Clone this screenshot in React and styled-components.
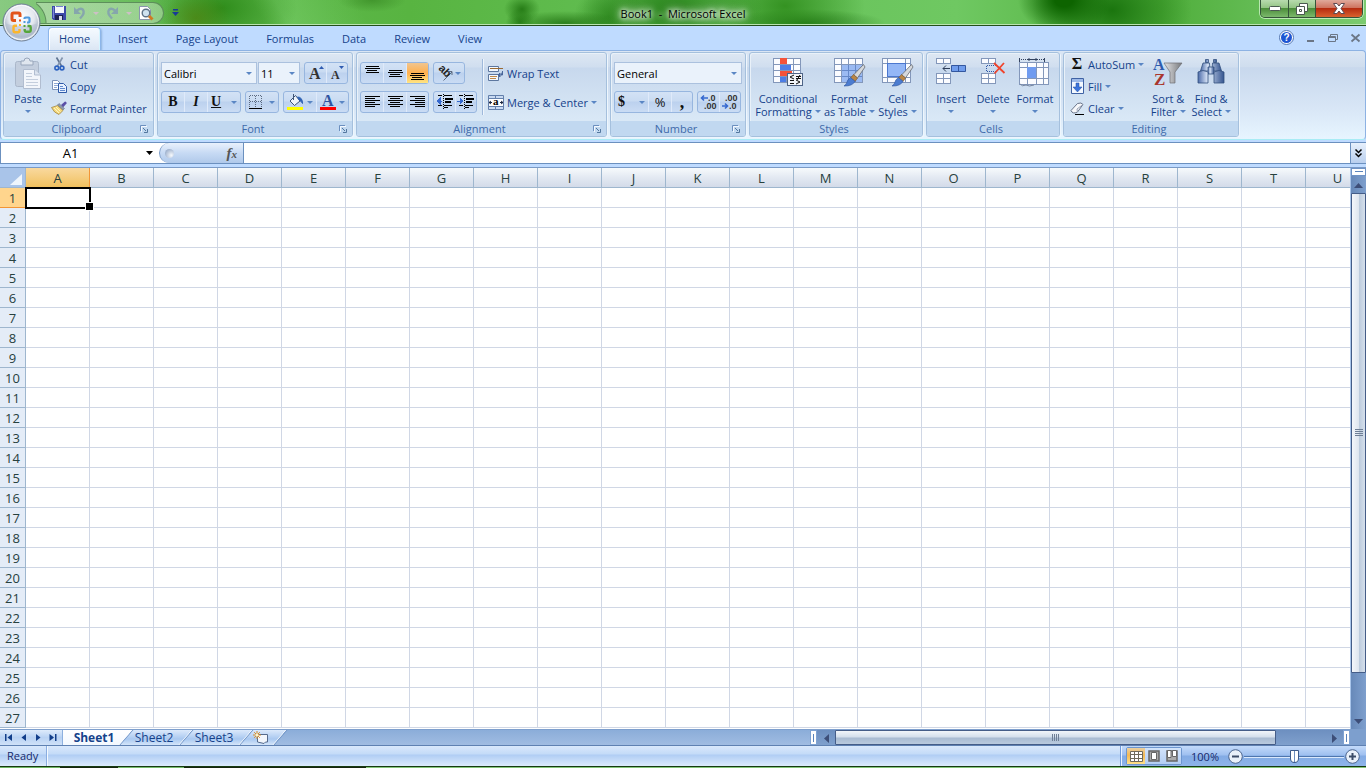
import { useEffect, useState } from "react";
import styled, { createGlobalStyle, css } from "styled-components";

const LETTERS = "ABCDEFGHIJKLMNOPQRSTUVWXYZ".split("");
const TABS = ["Home", "Insert", "Page Layout", "Formulas", "Data", "Review", "View"];

const GlobalStyle = createGlobalStyle`
    * {
        box-sizing: border-box;
    }
    body {
        margin: 0;
        font-family: "Open Sans", "Noto Sans", sans-serif;
        font-size: 11px;
        color: #15428b;
        overflow: hidden;
    }
    button, input, select {
        font: inherit;
        color: inherit;
        margin: 0;
        padding: 0;
        border: 0;
        background: none;
    }
    svg {
        display: block;
        flex: none;
        overflow: visible;
    }
`

const Shell = styled.div`
    height: 100vh;
    display: flex;
    flex-direction: column;
    background: #bfdbff;
`

/* ---------- title bar ---------- */

const TitleBar = styled.header`
    position: relative;
    height: 26px;
    flex: none;
    display: grid;
    grid-template-columns: 1fr auto 1fr;
    border-bottom: 1px solid #22501a;
    box-shadow: inset 0 -1px 0 #b9e3b0;
    background:
        linear-gradient(90deg, rgba(200, 225, 200, 0.35), transparent 13%),
        radial-gradient(ellipse 34px 26px at 196px 18px, rgba(80, 125, 10, 0.6), transparent),
        radial-gradient(ellipse 75px 50px at 222px 8px, rgba(35, 130, 15, 0.8), transparent),
        linear-gradient(60deg, transparent 230px, rgba(125, 210, 110, 0.5) 250px, transparent 320px),
        radial-gradient(ellipse 34px 12px at 372px 0, rgba(50, 130, 30, 0.6), transparent),
        radial-gradient(ellipse 18px 14px at 522px 9px, rgba(25, 110, 10, 0.8), transparent),
        radial-gradient(ellipse 14px 14px at 520px 22px, rgba(25, 110, 10, 0.7), transparent),
        radial-gradient(ellipse 60px 12px at 565px 23px, rgba(25, 105, 10, 0.7), transparent),
        radial-gradient(ellipse 36px 30px at 610px 16px, rgba(30, 120, 15, 0.6), transparent),
        radial-gradient(ellipse 90px 60px at 672px 10px, rgba(25, 115, 12, 0.8), transparent),
        radial-gradient(ellipse 80px 50px at 785px 6px, rgba(35, 130, 15, 0.75), transparent),
        radial-gradient(ellipse 80px 14px at 805px 23px, rgba(20, 100, 10, 0.7), transparent),
        radial-gradient(ellipse 46px 34px at 1064px 0, #0d6400 20%, transparent),
        radial-gradient(ellipse 80px 60px at 1112px 10px, rgba(20, 110, 8, 0.9), transparent),
        linear-gradient(90deg, #66bd5b 0, #58b441 30%, #64c056 50%, #6fc862 70%, #4fae3b 85%, #7bcb70 100%);
`

const QuickAccess = styled.div`
    display: flex;
    align-items: flex-start;
    padding: 2px 0 0 36px;
`

const Pill = styled.div`
    height: 22px;
    padding: 0 9px 0 16px;
    display: flex;
    align-items: center;
    gap: 7px;
    border: 1px solid #5d8f5b;
    border-left: 0;
    border-radius: 0 11px 11px 0;
    background: radial-gradient(circle at -14px 20px, transparent 23px, #5d8f5b 24px, rgba(225, 240, 222, 0.4) 25px);
`

const IconButton = styled.button`
    display: flex;
    align-items: center;
    justify-content: center;
`

const Customize = styled(IconButton)`
    width: 9px;
    height: 22px;
    margin-left: 7px;
`

const Title = styled.h1`
    margin: 0;
    padding-top: 1px;
    font-size: 11px;
    font-weight: 400;
    line-height: 26px;
    color: #000;
    white-space: pre;
    text-shadow: 0 0 4px #fff, 0 0 7px #fff, 0 0 10px #fff, 0 0 14px #e8ffe0;
`

const WindowButtons = styled.div`
    justify-self: end;
    display: flex;
    height: 18px;
    margin-right: 3px;
    border: 1px solid #35543a;
    border-top: 0;
    border-radius: 0 0 5px 5px;
    overflow: hidden;
    box-shadow: 0 0 0 1px rgba(220, 250, 215, 0.7);
`

const WindowButton = styled(IconButton)`
    width: ${(props) => (props.$close ? 47 : 27)}px;
    border-left: ${(props) => (props.$first ? 0 : "1px solid #35543a")};
    background: ${(props) =>
        props.$close
            ? "linear-gradient(#e0a99b, #cf7460 45%, #b62c10 50%, #d9622e)"
            : "linear-gradient(#b8dbae, #93c484 45%, #4c8e3b 50%, #7cb96c)"};
`

const Orb = styled.button`
    position: absolute;
    left: 2px;
    top: 3px;
    z-index: 2;
`

/* ---------- ribbon tabs ---------- */

const TabBar = styled.nav`
    height: 24px;
    flex: none;
    padding: 1px 6px 0 48px;
    display: flex;
    justify-content: space-between;
    background: #bfdbff;
`

const TabList = styled.div`
    display: flex;
    gap: 6px;
`

const Tab = styled.button`
    padding: 0 10px 2px;
    border: 1px solid transparent;
    border-bottom: 0;
    border-radius: 4px 4px 0 0;
    ${(props) =>
        props.$active &&
        css`
            border-color: #8db6ea;
            background: linear-gradient(#f5faff, #e6eff9 60%, #dbe6f4);
            box-shadow: inset 1px 1px 0 #fff, inset -1px 0 0 #d5f4ff, 1px 1px 2px #8fb2de;
        `}
`

const DocButtons = styled.div`
    display: flex;
    align-items: center;
    gap: 13px;
    padding-bottom: 2px;
`

/* ---------- ribbon ---------- */

const Ribbon = styled.div`
    height: 90px;
    flex: none;
    display: flex;
    gap: 3px;
    padding: 1px 2px 2px;
    border: 1px solid #8db2e3;
    border-bottom-color: #a8ecf5;
    border-radius: 4px;
    background: linear-gradient(#dbe6f4, #cfddee 18%, #c8d8ed 19%, #d8e6f6 65%, #e7f5ff);
`

const Group = styled.section`
    width: ${(props) => props.$width}px;
    flex: none;
    display: flex;
    flex-direction: column;
    border: 1px solid #a5c0dd;
    border-radius: 3px;
    background: linear-gradient(#dde7f3, #d0deef 17%, #c7d8ed 18%, #d9e8f6 80%);
    box-shadow: 1px 1px 0 #eef6fd, inset 1px 1px 0 #e9f1f9;
    overflow: hidden;
`

const GroupBody = styled.div`
    flex: 1;
    display: flex;
    padding: 0 3px;
`

const GroupName = styled.div`
    height: 15px;
    display: grid;
    grid-template-columns: 14px 1fr 18px;
    align-items: center;
    text-align: center;
    line-height: 15px;
    color: #3e6aaa;
    background: #c1d8f0;
`

const Stack = styled.div`
    display: flex;
    flex-direction: column;
`

const SmallButton = styled.button`
    height: 22px;
    padding: 0 2px;
    display: flex;
    align-items: center;
    gap: 3px;
    white-space: nowrap;
`

const IconSlot = styled.span`
    width: 16px;
    display: flex;
    justify-content: center;
    color: #111;
`

const BigButton = styled.button`
    width: ${(props) => props.$width || 42}px;
    flex: none;
    display: flex;
    flex-direction: column;
    align-items: center;
    padding-top: 5px;
    line-height: 13px;
    white-space: nowrap;
`

const BigIcon = styled.span`
    height: 34px;
    display: flex;
    align-items: flex-start;
`

const WithArrow = styled.span`
    height: 13px;
    display: flex;
    align-items: center;
    gap: 3px;
`

const Controls = styled.div`
    display: flex;
    flex-direction: column;
    gap: 7px;
    padding-top: 9px;
`

const Line = styled.div`
    display: flex;
    gap: ${(props) => props.$gap || 4}px;
`

const Combo = styled.label`
    width: ${(props) => props.$width}px;
    height: 22px;
    display: grid;
    align-items: center;
    border: 1px solid #abc1de;
    background: #eaf2fb;
    color: #000;

    select {
        grid-area: 1 / 1;
        width: 100%;
        padding-left: 2px;
        appearance: none;
    }
    svg {
        grid-area: 1 / 1;
        justify-self: end;
        margin-right: 4px;
        pointer-events: none;
    }
`

const ButtonSet = styled.div`
    height: 22px;
    display: flex;
    border: 1px solid #97b6df;
    border-radius: 3px;
    background: linear-gradient(#d3e2f5, #c9dbf2 45%, #bcd1ee 50%, #cadcf4);
`

const SetButton = styled.button`
    width: ${(props) => props.$width || 21}px;
    display: flex;
    align-items: center;
    justify-content: ${(props) => (props.$split ? "space-between" : "center")};
    padding: 0 ${(props) => (props.$split ? 3 : 0)}px;
    color: #111;

    & + & {
        border-left: 1px solid #dfeafa;
    }
    ${(props) =>
        props.$on &&
        css`
            background: linear-gradient(#f0c590, #fdb45a 40%, #ffb04f 50%, #ffe583);
        `}
`

const Glyph = styled.span`
    font-family: "Liberation Serif", serif;
    font-size: ${(props) => props.$size || 14}px;
    font-weight: 700;
    font-style: ${(props) => (props.$italic ? "italic" : "normal")};
    text-decoration: ${(props) => (props.$underline ? "underline" : "none")};
    line-height: 16px;
`

const Percent = styled.span`
    font-size: 13px;
    line-height: 18px;
`

const Divider = styled.div`
    width: 1px;
    margin: 6px 3px 6px 5px;
    background: #9fb9db;
    box-shadow: 1px 0 0 #eff5fc;
`

/* ---------- formula bar ---------- */

const FormulaBar = styled.div`
    height: 22px;
    flex: none;
    margin: 2px 0 3px;
    display: flex;
    border: 1px solid #6b90bf;
    border-right: 0;
    background: #fff;
    color: #000;
    font-size: 13px;
`

const NameBox = styled.div`
    width: 158px;
    display: flex;

    input {
        width: 139px;
        text-align: center;
    }
    button {
        flex: 1;
    }
`

const FxBox = styled.div`
    width: 85px;
    display: flex;
    align-items: center;
    justify-content: space-between;
    padding: 0 6px 0 5px;
    border-left: 1px solid #7d9dc8;
    border-right: 1px solid #6b90bf;
    border-radius: 10px 0 0 10px;
    background: linear-gradient(#e9f1fc, #c7daf4 50%, #b0c9ea);
`

const Knob = styled.span`
    width: 9px;
    height: 9px;
    border-radius: 50%;
    background: radial-gradient(circle at 70% 70%, #f6f9fd, #8fa4c4 8px);
`

const Fx = styled.button`
    font-family: "Liberation Serif", serif;
    font-style: italic;
    font-weight: 700;
    font-size: 15px;
    line-height: 18px;
    color: #555;

    small {
        font-size: 11px;
    }
`

const FormulaInput = styled.input`
    flex: 1;
    min-width: 0;
    padding: 0 4px;
`

const Expand = styled(IconButton)`
    width: 16px;
    border-left: 1px solid #6b90bf;
    background: linear-gradient(#e7f0fc, #b9cfee);
`

/* ---------- grid ---------- */

const Workspace = styled.main`
    flex: 1;
    min-height: 0;
    display: flex;
    border-top: 1px solid #7a9ac6;
`

const SheetArea = styled.div`
    flex: 1;
    min-width: 0;
    overflow: hidden;
    background: #fff;
`

const Sheet = styled.table`
    width: max-content;
    table-layout: fixed;
    border-collapse: separate;
    border-spacing: 0;
    font-size: 13px;
    line-height: 18px;
    color: #27413e;

    th, td {
        height: 20px;
        padding: 0;
    }
`

const Corner = styled.td`
    border-right: 1px solid #9eb6ce;
    border-bottom: 1px solid #9eb6ce;
    background: #a9c4e9;

    svg {
        margin: 4px 2px 0 10px;
    }
`

const ColHead = styled.th`
    width: 64px;
    font-weight: 400;
    border-right: 1px solid ${(props) => (props.$active ? "#f29536" : "#9eb6ce")};
    border-bottom: 1px solid ${(props) => (props.$active ? "#f29536" : "#9eb6ce")};
    background: ${(props) =>
        props.$active ? "linear-gradient(#f9d99f, #f1c15f)" : "linear-gradient(#f7fafc, #e3e9f2 50%, #d3dbe9)"};
`

const RowHead = styled.th`
    width: 26px;
    font-weight: 400;
    border-right: 1px solid ${(props) => (props.$active ? "#f29536" : "#9eb6ce")};
    border-bottom: 1px solid ${(props) => (props.$active ? "#f29536" : "#9eb6ce")};
    background: ${(props) => (props.$active ? "#ffd58d" : "#e4ecf7")};
`

const Cell = styled.td`
    border-right: 1px solid #d0d7e5;
    border-bottom: 1px solid #d0d7e5;
    ${(props) =>
        props.$active &&
        css`
            position: relative;

            &::before {
                content: "";
                position: absolute;
                inset: -1px -2px -2px -1px;
                border: 2px solid #000;
            }
            &::after {
                content: "";
                position: absolute;
                right: -5px;
                bottom: -4px;
                width: 7px;
                height: 7px;
                border: 1px solid #fff;
                background: #000;
            }
        `}
`

const VScroll = styled.div`
    width: 16px;
    flex: none;
    display: flex;
    flex-direction: column;
    align-items: stretch;
    border-left: 1px solid #a9c5ea;
    background: linear-gradient(90deg, #6789b9, #7e9fcd);
`

const SplitBox = styled.div`
    height: 8px;
    margin-bottom: 1px;
    border: 1px solid #6f93c6;
    background: linear-gradient(#fff 2px, #5c84bb 2px, #5c84bb 3px, #fff 3px) center / 8px 100% no-repeat #fff;
`

const ScrollButton = styled(IconButton)`
    width: ${(props) => (props.$wide ? 18 : 15)}px;
    height: 16px;
`

const VThumb = styled.div`
    flex: 12;
    display: flex;
    align-items: center;
    justify-content: center;
    border: 1px solid #455d88;
    border-radius: 1px;
    background: linear-gradient(90deg, #f4f7fb, #dfe6ef 50%, #bccbdd 55%, #d6e0ec);
`

const VRest = styled.div`
    flex: 1;
`

/* ---------- sheet tabs + horizontal scroll ---------- */

const BottomBar = styled.div`
    height: 17px;
    flex: none;
    display: flex;
    border-top: 1px solid #7e9fcd;
    border-bottom: 1px solid #5f81b2;
    padding-right: 16px;
    background: #7d9fce;
`

const TabsArea = styled.div`
    flex: 3;
    min-width: 0;
    display: flex;
    background: linear-gradient(#8badd9, #a0bce2);
`

const SheetNav = styled.div`
    width: 63px;
    flex: none;
    display: flex;
    align-items: center;
    justify-content: space-around;
    padding: 0 2px;
    border-right: 1px solid #8db0df;
    background: linear-gradient(#deebfb, #b9d2f3 50%, #cfe1f8);
`

const SheetTabs = styled.div`
    display: flex;
    flex: 1;
    overflow: hidden;
`

const SheetTab = styled.button`
    position: relative;
    z-index: 0;
    width: ${(props) => props.$width || 60}px;
    padding-right: ${(props) => (props.$active ? 2 : 6)}px;
    display: flex;
    align-items: center;
    justify-content: center;
    font-size: 12px;
    font-weight: ${(props) => (props.$active ? 700 : 400)};
    line-height: 15px;
    white-space: nowrap;

    &::before {
        content: "";
        position: absolute;
        z-index: -1;
        inset: 0 0 0 ${(props) => (props.$active ? -20 : 0)}px;
        transform: skewX(-41deg);
        border-right: 1px solid #6f93c6;
        box-shadow: inset -1px 0 0 #fff;
        background: ${(props) => (props.$active ? "linear-gradient(#fff, #f3f8ff)" : "linear-gradient(#dbe9fb, #a9c8f0 60%, #d4e5fa)")};
    }
`

const HScroll = styled.div`
    flex: 2;
    display: flex;
    align-items: stretch;
    background: linear-gradient(#6d8fc0, #7fa0cd);
`

const HSplit = styled.div`
    width: 7px;
    border: 1px solid #7fa3d3;
    background: linear-gradient(#5c84bb, #5c84bb) center / 1px 8px no-repeat #fff;
`

const HThumb = styled.div`
    flex: 9;
    display: flex;
    align-items: center;
    justify-content: center;
    border: 1px solid #455d88;
    border-radius: 1px;
    background: linear-gradient(#f1f5fa, #d4dfec 45%, #a9bbd2 55%, #b9cade);
`

const HRest = styled.div`
    flex: 1;
`

/* ---------- status bar ---------- */

const StatusBar = styled.footer`
    height: 20px;
    flex: none;
    display: flex;
    justify-content: space-between;
    background: linear-gradient(#d9e8fc, #c4dbf8 40%, #b0cdf4 45%, #dcebfd);
`

const StatusText = styled.div`
    padding: 0 8px 0 7px;
    line-height: 20px;
    color: #15296b;
    border-right: 1px solid #8aade0;
    box-shadow: 1px 0 0 #f3f9ff;
`

const ZoomArea = styled.div`
    display: flex;
    align-items: center;
    gap: 9px;
    padding: 0 6px 0 5px;
    border-left: 1px solid #6f9bdb;
    box-shadow: inset 1px 0 0 #eaf3ff;
    background: linear-gradient(#c3dafa, #9fc0f0 45%, #83abe4 50%, #8eb4ea);
    color: #15296b;
`

const Views = styled.div`
    display: flex;
    height: 18px;
    border: 1px solid #6d96cf;
    border-radius: 2px;
`

const ViewButton = styled(IconButton)`
    width: 18px;
    background: ${(props) =>
        props.$on ? "linear-gradient(#e9cfa3, #f5b952 45%, #ffe18a)" : "linear-gradient(#d2e3fa, #b3cef3)"};
`

const ZoomControl = styled.div`
    display: flex;
    align-items: center;
    gap: 1px;
`

const ZoomSlider = styled.input`
    width: 100px;
    height: 14px;
    appearance: none;
    background: linear-gradient(#4f76ae, #4f76ae) 0 7px / 100% 1px no-repeat, linear-gradient(#dbe9fc, #dbe9fc) 0 8px / 100% 1px no-repeat;

    &::-webkit-slider-thumb {
        appearance: none;
        width: 9px;
        height: 13px;
        border: 1px solid #3c5a8a;
        border-radius: 1px 1px 5px 5px;
        background: linear-gradient(90deg, #fff 3px, #6d8fc0 3px, #6d8fc0 4px, #fff 4px);
    }
`

const DesktopEdge = styled.div`
    height: 2px;
    flex: none;
    border-top: 1px solid #173a12;
    background: linear-gradient(90deg, #6fb865 60px, #16250f 60px, #16250f 118px, #77bd6c 118px, #77bd6c 184px, #16250f 184px, #16250f 366px, #86c77b 366px);
`

/* ---------- icons ---------- */

const Arrow = ({ color = "#5a86c4" }) => (
    <svg width="6" height="3" viewBox="0 0 6 3">
        <path d="M0 0h6L3 3z" fill={color} />
    </svg>
)

const Launcher = () => (
    <svg width="8" height="8" viewBox="0 0 8 8" fill="none">
        <path d="M0.500 6V0.500H6" stroke="#6b8fbf" />
        <path d="M1.500 7V1.500H7" stroke="#f4f9ff" />
        <path d="M3 3l3 3M7.500 4v3.500H4" stroke="#54789f" />
    </svg>
)

const OrbIcon = () => (
    <svg width="39" height="39" viewBox="0 0 39 39">
        <defs>
            <radialGradient id="orb" cx="50%" cy="36%" r="62%">
                <stop offset="0" stopColor="#fff" />
                <stop offset="0.55" stopColor="#e4e8ef" />
                <stop offset="0.85" stopColor="#a9b4c4" />
                <stop offset="1" stopColor="#dfe8f3" />
            </radialGradient>
        </defs>
        <circle cx="19.500" cy="19.500" r="18.500" fill="url(#orb)" stroke="#6f7f93" />
        <path d="M3 20a16.500 16.500 0 0 0 33 0c-8 4-25 4-33 0z" fill="#b4c0d2" opacity="0.55" />
        <circle cx="19.500" cy="19.500" r="17" fill="none" stroke="#fff" opacity="0.8" />
        <g fill="none" strokeLinejoin="round">
            <path d="M14 17.500h-2.500q-1.500 0-1.500-1.500V11.500q0-1.500 1.500-1.500h5q1.500 0 1.500 1.500V14" stroke="#e2541a" strokeWidth="3" />
            <path d="M22.500 16v-0.500q0-1 1-1h3q1 0 1 1v3q0 1-1 1H25" stroke="#4f9ade" strokeWidth="2.200" />
            <path d="M17.500 26v2q0 1.200-1.200 1.200h-3.600q-1.200 0-1.200-1.200v-4q0-1.200 1.200-1.200H15" stroke="#fbb62c" strokeWidth="2.400" />
            <path d="M25.500 23h2q1.200 0 1.200 1.200v3.300q0 1.200-1.200 1.200h-3.600q-1.200 0-1.200-1.200V26" stroke="#55a63a" strokeWidth="2.400" />
        </g>
        <path d="M17 16.500h2v2h-2z" fill="#e2541a" />
        <path d="M21.500 18h2v2h-2z" fill="#4f9ade" />
        <path d="M17 21h2v2h-2z" fill="#fbb62c" />
        <path d="M21.500 22h2v2h-2z" fill="#55a63a" />
    </svg>
)

const SaveIcon = () => (
    <svg width="14" height="14" viewBox="0 0 14 14">
        <path d="M0 0h14v14H1.500L0 12.500z" fill="#3d4aa8" />
        <path d="M3 0h9v7H3z" fill="#f4f6fc" />
        <path d="M4 0h7v1H4z" fill="#7380cf" />
        <path d="M3 9h8v5H3z" fill="#1d2355" />
        <path d="M7 10h3v4H7z" fill="#d9dcec" />
        <path d="M1 1h1v11H1z" fill="#7d89dc" />
    </svg>
)

const UndoIcon = ({ flip }) => (
    <svg width="13" height="14" viewBox="0 0 13 14">
        <g transform={flip ? "translate(13 0) scale(-1 1)" : undefined}>
            <path d="M1 1v7h7z" fill="#86a6ac" />
            <path d="M3.500 5Q7 1.500 9.800 3.500 12.500 7 7 12.500" fill="none" stroke="#86a6ac" strokeWidth="2.400" />
        </g>
    </svg>
)

const PreviewIcon = () => (
    <svg width="15" height="15" viewBox="0 0 15 15">
        <path d="M0.500 0.500h8l3 3V13.500h-11z" fill="#fff" stroke="#8995ad" />
        <circle cx="7" cy="7" r="3.800" fill="#cfe2ef" stroke="#5e7186" strokeWidth="1.400" />
        <path d="M10 10l3.500 3.500" stroke="#d07a20" strokeWidth="3" />
    </svg>
)

const PasteIcon = () => (
    <svg width="28" height="31" viewBox="0 0 28 31">
        <rect x="1.500" y="3.500" width="23" height="25" rx="2" fill="#c3cede" stroke="#aab7ca" />
        <path d="M7 3h3q0-3 3-3t3 3h3v4H7z" fill="#dfe6ef" stroke="#98a6bb" />
        <path d="M9.500 11.500h11l6 5.500V30.500H9.500z" fill="#f3f6fb" stroke="#b1bdd0" />
        <path d="M20.500 11.500V17h6" fill="#dce4ef" stroke="#b1bdd0" />
        <path d="M12 15.500h6M12 18.500h6M12 21.500h12M12 24.500h12M12 27.500h12" stroke="#c4cedd" />
    </svg>
)

const CutIcon = () => (
    <svg width="11" height="14" viewBox="0 0 11 14" fill="none">
        <path d="M2.500 0.500L7.500 9" stroke="#5f7390" strokeWidth="1.600" />
        <path d="M8.500 0.500L3.500 9" stroke="#8294ad" strokeWidth="1.600" />
        <circle cx="2.800" cy="11" r="1.900" stroke="#2c62c0" strokeWidth="1.600" />
        <circle cx="8" cy="11" r="1.900" stroke="#2c62c0" strokeWidth="1.600" />
    </svg>
)

const CopyIcon = () => (
    <svg width="15" height="13" viewBox="0 0 15 13">
        <path d="M0.500 0.500h5l3 3v6h-8z" fill="#fff" stroke="#7d93b9" />
        <path d="M2 3.500h4M2 5.500h4M2 7.500h3" stroke="#8fa9d4" />
        <path d="M6.500 3.500h5l3 3v6h-8z" fill="#e9f2ff" stroke="#2f5ba9" />
        <path d="M8 6.500h3M8 8.500h5M8 10.500h5" stroke="#5f88cd" />
    </svg>
)

const PainterIcon = () => (
    <svg width="16" height="14" viewBox="0 0 16 14">
        <path d="M10 4L14 0.500q2 0 1.500 2L12 6.500z" fill="#5a4fa6" />
        <path d="M8 2.500l5.500 5-1.500 1.500L6.500 4z" fill="#8e99ac" stroke="#5d687c" strokeWidth="0.500" />
        <path d="M6.500 4.500L12 9.500 8 13.500Q3 12 0.500 6.500z" fill="#f4d97c" stroke="#8a6a25" strokeWidth="0.600" />
        <path d="M3 7l5 5M5 6l4.500 4.500" stroke="#fff4c2" />
    </svg>
)

const GrowIcon = ({ down }) => (
    <svg width="18" height="18" viewBox="0 0 18 18">
        <text x={down ? 3 : 2} y="15" fontFamily="Liberation Serif, serif" fontWeight="700" fontSize={down ? 12 : 16} fill="#333">A</text>
        <path d={down ? "M11 2h5l-2.500 3z" : "M12 5h5l-2.500-3z"} fill="#2f5bb0" />
    </svg>
)

const BorderIcon = () => (
    <svg width="14" height="14" viewBox="0 0 14 14" shapeRendering="crispEdges">
        <path d="M0.500 0.500h12M0.500 6.500h12M0.500 0.500v12M6.500 0.500v12M12.500 0.500v12" stroke="#5c6b82" strokeDasharray="1 1" />
        <path d="M0 13.500h13" stroke="#000" />
    </svg>
)

const FillColorIcon = () => (
    <svg width="17" height="18" viewBox="0 0 17 18">
        <path d="M3 8l5.500-5.500L13 8l-5.500 4.500z" fill="#eef4fb" stroke="#3e5577" />
        <path d="M6.500 1v6" stroke="#3e5577" />
        <path d="M10.500 4q5 0 5 6.500-1-2.500-3-3z" fill="#2f62b4" stroke="#2f62b4" />
        <path d="M0 14h16v3H0z" fill="#ff0" />
    </svg>
)

const FontColorIcon = () => (
    <svg width="17" height="18" viewBox="0 0 17 18">
        <text x="2" y="13" fontFamily="Liberation Serif, serif" fontWeight="700" fontSize="16" fill="#2f54a0">A</text>
        <path d="M0 14h16v3H0z" fill="#f00" />
    </svg>
)

const LinesIcon = ({ rows }) => (
    <svg width="15" height="16" viewBox="0 0 15 16" shapeRendering="crispEdges">
        {rows.map(([y, x, w]) => (
            <rect key={y} x={x} y={y} width={w} height="1" fill="#000" />
        ))}
    </svg>
)

const OrientationIcon = () => (
    <svg width="16" height="16" viewBox="0 0 16 16">
        <path d="M6.500 15.500L15 7M15 6.500h-3.500M15 6.500V10" fill="none" stroke="#5d6a80" />
        <text x="1" y="4" transform="rotate(45 1 4)" fontFamily="Liberation Sans, sans-serif" fontWeight="700" fontSize="11" fill="#222">ab</text>
    </svg>
)

const IndentIcon = ({ out }) => (
    <svg width="18" height="16" viewBox="0 0 18 16" shapeRendering="crispEdges">
        <path d="M2 1.500h4M8 1.500h8M9 4.500h8M9 5.500h8M9 7.500h6M9 8.500h6M8 11.500h8M2 11.500h4M8 13.500h4" stroke="#000" />
        <path d="M7.500 0v16" stroke="#000" strokeDasharray="1 1" />
        <path d={out ? "M6 7h-3M4 4L1 7l3 3z" : "M0 7h3M3 4l3 3-3 3z"} fill="#3669cf" stroke="#3669cf" />
    </svg>
)

const WrapIcon = () => (
    <svg width="16" height="15" viewBox="0 0 16 15">
        <path d="M0.500 0.500h10v5h-10zM0.500 8.500h10v6h-10z" fill="#f4f8fd" stroke="#5d779f" />
        <path d="M2 2.500h13" stroke="#9a6a33" />
        <path d="M2 10.500h7M2 12.500h6" stroke="#c08b4c" />
        <path d="M14.500 5v4h-2M12 7v4L10 9z" fill="#48669a" stroke="#48669a" />
    </svg>
)

const MergeIcon = () => (
    <svg width="16" height="15" viewBox="0 0 16 15">
        <path d="M0.500 0.500h15v14h-15z" fill="#c9daf2" stroke="#6480ab" />
        <path d="M7.500 0v4M7.500 11v4M0 3.500h16M0 11.500h16" stroke="#6480ab" />
        <path d="M1 4h14v7H1z" fill="#fff" />
        <text x="5" y="10" fontFamily="Liberation Serif, serif" fontWeight="700" fontSize="11">a</text>
        <path d="M1 7.500h3M12 7.500h3M3 6l-2 1.500L3 9M13 6l2 1.500L13 9" stroke="#1c2740" fill="none" />
    </svg>
)

const DecimalIcon = ({ less }) => (
    <svg width="18" height="16" viewBox="0 0 18 16" fontFamily="Liberation Sans, sans-serif" fontWeight="700" fontSize="9" fill="#333">
        <text x={less ? 4 : 8} y="7">{less ? ".00" : ".0"}</text>
        <text x={less ? 8 : 4} y="15">{less ? ".0" : ".00"}</text>
        <path d={less ? "M1 12h6M4 9.500l2.500 2.500L4 14.500" : "M8 4H2M4 1.500L1.500 4 4 6.500"} fill="none" stroke="#3669cf" strokeWidth="1.600" />
    </svg>
)

const MiniGrid = ({ xs, ys, fill = "#fbfcff" }) => {
    const x0 = xs[0], x1 = xs[xs.length - 1], y0 = ys[0], y1 = ys[ys.length - 1]
    return (
        <g shapeRendering="crispEdges">
            <rect x={x0} y={y0} width={x1 - x0} height={y1 - y0} fill={fill} />
            {xs.map((x) => <rect key={"x" + x} x={x} y={y0} width="1" height={y1 - y0 + 1} fill="#8397ba" />)}
            {ys.map((y) => <rect key={"y" + y} x={x0} y={y} width={x1 - x0 + 1} height="1" fill="#8397ba" />)}
        </g>
    )
}

const Brush = () => (
    <g>
        <path d="M29.500 6.500L31 9 23.500 20 19.500 17z" fill="#d5d8dc" stroke="#66696e" strokeWidth="0.800" />
        <path d="M19.500 16.500l4 3.500-2.500 3.500-4.500-3.500z" fill="#b98647" stroke="#7b5528" strokeWidth="0.600" />
        <path d="M16.500 19.500l4.500 3.800q-2.500 5-11 4.700 2.500-1.500 3-4t3.500-4.500z" fill="#4c7cd0" stroke="#2d549c" strokeWidth="0.600" />
    </g>
)

const ConditionalIcon = () => (
    <svg width="31" height="30" viewBox="0 0 31 30">
        <MiniGrid xs={[0, 7, 13, 20, 27]} ys={[0, 6, 12, 18, 24]} />
        <path d="M7 0h7v6H7zM7 13h12v5H7z" fill="#f4533a" />
        <path d="M7 7h11v5H7zM7 19h6v5H7z" fill="#4d7ee6" />
        <rect x="14.500" y="15.500" width="15" height="12" fill="#f2f5f9" stroke="#4e6487" />
        <path d="M21 17l-4 2 4 2M17 22.500h4M17 25.500h4M23 18.500h5M23 20.500h5M27 17l-3 5M23 22l4 2-4 2" fill="none" stroke="#111" />
    </svg>
)

const TableFormatIcon = () => (
    <svg width="32" height="30" viewBox="0 0 32 30">
        <MiniGrid xs={[0, 7, 14, 21, 28]} ys={[0, 6, 12, 18, 24]} />
        <g opacity="0.75">
            <rect x="8" y="7" width="20" height="17" fill="#7ba5ee" />
            <path d="M14.500 7v17M21.500 7v17M8 12.500h20M8 18.500h20" stroke="#5c84cf" />
        </g>
        <Brush />
    </svg>
)

const CellStylesIcon = () => (
    <svg width="32" height="30" viewBox="0 0 32 30">
        <MiniGrid xs={[0, 5, 23, 28]} ys={[0, 5, 19, 24]} />
        <rect x="5.500" y="5.500" width="18" height="13" fill="#94b7f6" stroke="#4b77cf" />
        <Brush />
    </svg>
)

const InsertIcon = () => (
    <svg width="31" height="28" viewBox="0 0 31 28">
        <MiniGrid xs={[0, 7, 14]} ys={[0, 5]} />
        <MiniGrid xs={[0, 7, 14]} ys={[15, 20, 25]} />
        <path d="M14 10.500H7M10 7.500l-3 3 3 3" fill="none" stroke="#2e3d58" />
        <path d="M15.500 7.500h14v6h-14zM22.500 7.500v6" fill="#6f9cec" stroke="#33579f" />
    </svg>
)

const DeleteIcon = () => (
    <svg width="25" height="28" viewBox="0 0 25 28">
        <MiniGrid xs={[0, 7, 14]} ys={[0, 5]} />
        <MiniGrid xs={[0, 7, 14]} ys={[15, 20, 25]} />
        <path d="M15 7.500H5.500v6H15" fill="none" stroke="#2f57a6" strokeDasharray="1 1" />
        <path d="M13 5l10.500 10M23 5L13.500 15.500" stroke="#f0432b" strokeWidth="1.800" />
    </svg>
)

const FormatIcon = () => (
    <svg width="32" height="29" viewBox="0 0 32 29">
        <path d="M0.500 0v4M25.500 0v4" stroke="#33435f" />
        <path d="M2 1.500h23" stroke="#33435f" strokeDasharray="1 1" />
        <path d="M8 1.500h10M10 0v3M17 0v3" stroke="#33435f" />
        <MiniGrid xs={[0, 8, 17, 24, 29]} ys={[4, 9, 20, 26]} />
        <rect x="8" y="9" width="9" height="11" fill="#6f9bf0" />
        <path d="M1 26q2 3 6 1 3 2 8 0" fill="none" stroke="#74849f" />
    </svg>
)

const FillIcon = () => (
    <svg width="13" height="16" viewBox="0 0 13 16">
        <path d="M0.500 0.500h12v15h-12z" fill="#f3f8ff" stroke="#3f62a4" />
        <path d="M1 1h11v3H1z" fill="#9db9e8" />
        <path d="M5 5h3v4h3l-4.500 5L2 9h3z" fill="#3c74dc" stroke="#234f9f" strokeWidth="0.500" />
    </svg>
)

const ClearIcon = () => (
    <svg width="15" height="13" viewBox="0 0 15 13">
        <path d="M1 8.500L7.500 1.500q4-1.500 5.500 1L7.500 10q-5 2.500-6.500-1.500z" fill="#f7f8fb" stroke="#68748a" />
        <path d="M7.500 10L7 7l6-4.500" fill="none" stroke="#9aa5b8" />
        <path d="M5 12.500h9" stroke="#000" />
    </svg>
)

const SortIcon = () => (
    <svg width="30" height="29" viewBox="0 0 30 29" fontFamily="Liberation Serif, serif" fontWeight="700">
        <defs>
            <linearGradient id="funnel">
                <stop offset="0" stopColor="#e4e4e6" />
                <stop offset="1" stopColor="#77797d" />
            </linearGradient>
        </defs>
        <text x="0" y="12" fontSize="16" fill="#2f5cae">A</text>
        <text x="1" y="27" fontSize="17" fill="#a9362e">Z</text>
        <path d="M11 5h18l-7 9v11h-5V14z" fill="url(#funnel)" stroke="#6d6f73" strokeWidth="0.700" />
    </svg>
)

const FindIcon = () => (
    <svg width="28" height="27" viewBox="0 0 28 27">
        <defs>
            <linearGradient id="tube">
                <stop offset="0" stopColor="#4b6aa8" />
                <stop offset="0.35" stopColor="#d3e0f4" />
                <stop offset="1" stopColor="#34548f" />
            </linearGradient>
        </defs>
        <g fill="url(#tube)" stroke="#34507f" strokeWidth="0.800">
            <path d="M8.500 1.500h3v3h-3zM16.500 1.500h3v3h-3z" />
            <path d="M6 5h6.500l0.500 8H3.500zM15.500 5H22l2.500 8H15z" />
            <path d="M11 9h6v7h-6z" />
            <path d="M1 14q5-3 10 0v11H1zM17 14q5-3 10 0v11H17z" />
        </g>
    </svg>
)

const NewSheetIcon = () => (
    <svg width="16" height="13" viewBox="0 0 16 13">
        <path d="M4.500 3.500h10v7.500h-2L11 12.500 4.500 11z" fill="#f2f6fc" stroke="#556a8c" />
        <path d="M4 0v8M0 4h8M1.200 1.200l5.600 5.600M6.800 1.200L1.200 6.800" stroke="#d98b22" />
        <circle cx="4" cy="4" r="1.500" fill="#fff3c4" />
    </svg>
)

const Triangle = ({ d, w = 8, h = 8, fill = "#123e8a" }) => (
    <svg width={w} height={h} viewBox={`0 0 ${w} ${h}`}>
        <path d={d} fill={fill} />
    </svg>
)

const ZoomRound = ({ plus }) => (
    <svg width="15" height="15" viewBox="0 0 15 15">
        <circle cx="7.500" cy="7.500" r="6.800" fill="#e9f0fa" stroke="#4b648d" />
        <path d={plus ? "M4 7.500h7M7.500 4v7" : "M4 7.500h7"} stroke="#3c4c68" strokeWidth="2" />
    </svg>
)

const HelpIcon = () => (
    <svg width="15" height="15" viewBox="0 0 15 15">
        <circle cx="7.500" cy="7.500" r="7" fill="#fff" stroke="#5276b3" />
        <circle cx="7.500" cy="7.500" r="5.500" fill="#1f56d2" />
        <text x="7.500" y="11" textAnchor="middle" fontFamily="Liberation Sans, sans-serif" fontWeight="700" fontSize="10" fill="#fff">?</text>
    </svg>
)

const TOP = [[1, 1, 13], [3, 0, 15], [5, 2, 10], [7, 1, 13]]
const MIDDLE = TOP.map(([y, x, w]) => [y + 4, x, w])
const BOTTOM = TOP.map(([y, x, w]) => [y + 7, x, w])
const alignRows = (place) =>
    [15, 10, 15, 10, 15, 10].map((w, i) => [i * 2 + 2, place === "left" ? 0 : place === "right" ? 15 - w : Math.floor((15 - w) / 2), w])

/* ---------- parts ---------- */

function RibbonGroup({ name, width, launcher, children }) {
    return (
        <Group $width={width} aria-label={name}>
            <GroupBody>{children}</GroupBody>
            <GroupName>
                <span />
                <span>{name}</span>
                {launcher && <IconButton aria-label={name + " options"}><Launcher /></IconButton>}
            </GroupName>
        </Group>
    )
}

// an empty last line puts the arrow on a row of its own
function Big({ icon, lines, width }) {
    const last = lines[lines.length - 1]
    return (
        <BigButton $width={width}>
            <BigIcon>{icon}</BigIcon>
            {lines.slice(0, -1).map((line) => <span key={line}>{line}</span>)}
            <WithArrow>{last}<Arrow /></WithArrow>
        </BigButton>
    )
}

function Small({ icon, children, arrow }) {
    return (
        <SmallButton>
            <IconSlot>{icon}</IconSlot>
            <span>{children}</span>
            {arrow && <Arrow />}
        </SmallButton>
    )
}

function Dropdown({ label, width, value }) {
    return (
        <Combo $width={width}>
            <select aria-label={label} defaultValue={value}>
                <option>{value}</option>
            </select>
            <Arrow />
        </Combo>
    )
}

// rows and columns that fit in the window
function useGridSize() {
    const measure = () => ({
        rows: Math.max(1, Math.ceil((window.innerHeight - 228) / 20)),
        cols: Math.min(26, Math.max(1, Math.ceil((window.innerWidth - 42) / 64))),
    })
    const [size, setSize] = useState(measure)
    useEffect(() => {
        const onResize = () => setSize(measure())
        window.addEventListener("resize", onResize)
        return () => window.removeEventListener("resize", onResize)
    }, [])
    return size
}

export default function App() {
    const size = useGridSize()
    const columns = LETTERS.slice(0, size.cols)
    const rows = Array.from({ length: size.rows }, (_, i) => i + 1)

    return (
        <Shell>
            <GlobalStyle />
            <TitleBar>
                <QuickAccess>
                    <Pill>
                        <IconButton aria-label="Save"><SaveIcon /></IconButton>
                        <IconButton aria-label="Undo"><UndoIcon /></IconButton>
                        <Arrow color="#cdbfc6" />
                        <IconButton aria-label="Redo"><UndoIcon flip /></IconButton>
                        <Arrow color="#cdbfc6" />
                        <IconButton aria-label="Print preview"><PreviewIcon /></IconButton>
                    </Pill>
                    <Customize aria-label="Customize toolbar">
                        <Triangle w={7} h={8} d="M1 0h5v1.500H1zM0 3h7L3.500 7z" fill="#183a96" />
                    </Customize>
                </QuickAccess>
                <Title>Book1  -  Microsoft Excel</Title>
                <WindowButtons>
                    <WindowButton $first aria-label="Minimize">
                        <svg width="12" height="5"><rect x="0.500" y="0.500" width="11" height="4" rx="1" fill="#fff" stroke="#4a5a50" /></svg>
                    </WindowButton>
                    <WindowButton aria-label="Restore">
                        <svg width="12" height="12" fill="#fff" stroke="#4a5a50">
                            <path d="M3.500 0.500h8v8h-8z" />
                            <path d="M0.500 3.500h8v8h-8z" />
                            <path d="M3.500 6.500h2v2h-2z" />
                        </svg>
                    </WindowButton>
                    <WindowButton $close aria-label="Close">
                        <svg width="12" height="11" viewBox="0 0 12 11">
                            <path d="M0.500 0.500h3.500l2 2.500 2-2.500h3.500L8 5.500l3.500 5H8L6 8l-2 2.500H0.500L4 5.500z" fill="#fff" stroke="#5c4a52" />
                        </svg>
                    </WindowButton>
                </WindowButtons>
                <Orb aria-label="Office menu"><OrbIcon /></Orb>
            </TitleBar>

            <TabBar>
                <TabList>
                    {TABS.map((tab) => <Tab key={tab} $active={tab === "Home"}>{tab}</Tab>)}
                </TabList>
                <DocButtons>
                    <IconButton aria-label="Help"><HelpIcon /></IconButton>
                    <IconButton aria-label="Minimize workbook"><Triangle w={8} h={8} d="M0 6h7v2H0z" fill="#6b7686" /></IconButton>
                    <IconButton aria-label="Restore workbook">
                        <svg width="10" height="8" fill="none" stroke="#6b7686"><path d="M2.500 2V0.500h7v5H8M0.500 2.500h7v5h-7zM0.500 3.500h7" /></svg>
                    </IconButton>
                    <IconButton aria-label="Close workbook">
                        <svg width="9" height="8"><path d="M0.500 0.500l8 7M8.500 0.500l-8 7" stroke="#6b7686" strokeWidth="1.800" /></svg>
                    </IconButton>
                </DocButtons>
            </TabBar>

            <Ribbon>
                <RibbonGroup name="Clipboard" width={151} launcher>
                    <Big icon={<PasteIcon />} lines={["Paste", ""]} />
                    <Stack>
                        <Small icon={<CutIcon />}>Cut</Small>
                        <Small icon={<CopyIcon />}>Copy</Small>
                        <Small icon={<PainterIcon />}>Format Painter</Small>
                    </Stack>
                </RibbonGroup>

                <RibbonGroup name="Font" width={196} launcher>
                    <Controls>
                        <Line>
                            <Line $gap={1}>
                                <Dropdown label="Font" width={96} value="Calibri" />
                                <Dropdown label="Font size" width={42} value="11" />
                            </Line>
                            <ButtonSet>
                                <SetButton aria-label="Grow font"><GrowIcon /></SetButton>
                                <SetButton aria-label="Shrink font"><GrowIcon down /></SetButton>
                            </ButtonSet>
                        </Line>
                        <Line>
                            <ButtonSet>
                                <SetButton $width={22} aria-label="Bold"><Glyph>B</Glyph></SetButton>
                                <SetButton $width={23} aria-label="Italic"><Glyph $italic>I</Glyph></SetButton>
                                <SetButton $split $width={33} aria-label="Underline"><Glyph $underline>U</Glyph><Arrow /></SetButton>
                            </ButtonSet>
                            <ButtonSet>
                                <SetButton $split $width={32} aria-label="Borders"><BorderIcon /><Arrow /></SetButton>
                            </ButtonSet>
                            <ButtonSet>
                                <SetButton $split $width={32} aria-label="Fill color"><FillColorIcon /><Arrow /></SetButton>
                                <SetButton $split $width={32} aria-label="Font color"><FontColorIcon /><Arrow /></SetButton>
                            </ButtonSet>
                        </Line>
                    </Controls>
                </RibbonGroup>

                <RibbonGroup name="Alignment" width={251} launcher>
                    <Controls>
                        <Line>
                            <ButtonSet>
                                <SetButton $width={22} aria-label="Top align"><LinesIcon rows={TOP} /></SetButton>
                                <SetButton $width={23} aria-label="Middle align"><LinesIcon rows={MIDDLE} /></SetButton>
                                <SetButton $width={22} $on aria-label="Bottom align"><LinesIcon rows={BOTTOM} /></SetButton>
                            </ButtonSet>
                            <ButtonSet>
                                <SetButton $split $width={30} aria-label="Orientation"><OrientationIcon /><Arrow /></SetButton>
                            </ButtonSet>
                        </Line>
                        <Line>
                            <ButtonSet>
                                <SetButton $width={22} aria-label="Align left"><LinesIcon rows={alignRows("left")} /></SetButton>
                                <SetButton $width={23} aria-label="Center"><LinesIcon rows={alignRows("center")} /></SetButton>
                                <SetButton $width={22} aria-label="Align right"><LinesIcon rows={alignRows("right")} /></SetButton>
                            </ButtonSet>
                            <ButtonSet>
                                <SetButton aria-label="Decrease indent"><IndentIcon out /></SetButton>
                                <SetButton aria-label="Increase indent"><IndentIcon /></SetButton>
                            </ButtonSet>
                        </Line>
                    </Controls>
                    <Divider />
                    <Controls>
                        <Small icon={<WrapIcon />}>Wrap Text</Small>
                        <Small icon={<MergeIcon />} arrow>Merge &amp; Center</Small>
                    </Controls>
                </RibbonGroup>

                <RibbonGroup name="Number" width={136} launcher>
                    <Controls>
                        <Dropdown label="Number format" width={128} value="General" />
                        <Line>
                            <ButtonSet>
                                <SetButton $split $width={33} aria-label="Currency"><Glyph>$</Glyph><Arrow /></SetButton>
                                <SetButton $width={23} aria-label="Percent"><Percent>%</Percent></SetButton>
                                <SetButton aria-label="Comma"><Glyph $size={18}>,</Glyph></SetButton>
                            </ButtonSet>
                            <ButtonSet>
                                <SetButton aria-label="Increase decimal"><DecimalIcon /></SetButton>
                                <SetButton aria-label="Decrease decimal"><DecimalIcon less /></SetButton>
                            </ButtonSet>
                        </Line>
                    </Controls>
                </RibbonGroup>

                <RibbonGroup name="Styles" width={174}>
                    <Big icon={<ConditionalIcon />} width={70} lines={["Conditional", "Formatting"]} />
                    <Big icon={<TableFormatIcon />} width={53} lines={["Format", "as Table"]} />
                    <Big icon={<CellStylesIcon />} width={43} lines={["Cell", "Styles"]} />
                </RibbonGroup>

                <RibbonGroup name="Cells" width={134}>
                    <Big icon={<InsertIcon />} lines={["Insert", ""]} />
                    <Big icon={<DeleteIcon />} lines={["Delete", ""]} />
                    <Big icon={<FormatIcon />} lines={["Format", ""]} />
                </RibbonGroup>

                <RibbonGroup name="Editing" width={176}>
                    <Stack>
                        <Small icon={<Glyph $size={16}>Σ</Glyph>} arrow>AutoSum</Small>
                        <Small icon={<FillIcon />} arrow>Fill</Small>
                        <Small icon={<ClearIcon />} arrow>Clear</Small>
                    </Stack>
                    <Big icon={<SortIcon />} width={44} lines={["Sort &", "Filter"]} />
                    <Big icon={<FindIcon />} lines={["Find &", "Select"]} />
                </RibbonGroup>
            </Ribbon>

            <FormulaBar>
                <NameBox>
                    <input aria-label="Name box" defaultValue="A1" />
                    <IconButton aria-label="Show names"><Triangle w={7} h={4} d="M0 0h7L3.500 4z" fill="#000" /></IconButton>
                </NameBox>
                <FxBox>
                    <Knob />
                    <Fx aria-label="Insert function">f<small>x</small></Fx>
                </FxBox>
                <FormulaInput aria-label="Formula" />
                <Expand aria-label="Expand formula bar">
                    <svg width="7" height="9" fill="none" stroke="#000" strokeWidth="1.500"><path d="M0.500 0.500l3 3 3-3M0.500 4.500l3 3 3-3" /></svg>
                </Expand>
            </FormulaBar>

            <Workspace>
                <SheetArea>
                    <Sheet>
                        <thead>
                            <tr>
                                <Corner><svg width="12" height="11"><path d="M12 0v11H0z" fill="#eef5fd" /></svg></Corner>
                                {columns.map((col) => <ColHead key={col} scope="col" $active={col === "A"}>{col}</ColHead>)}
                            </tr>
                        </thead>
                        <tbody>
                            {rows.map((row) => (
                                <tr key={row}>
                                    <RowHead scope="row" $active={row === 1}>{row}</RowHead>
                                    {columns.map((col) => <Cell key={col} $active={row === 1 && col === "A"} />)}
                                </tr>
                            ))}
                        </tbody>
                    </Sheet>
                </SheetArea>
                <VScroll>
                    <SplitBox />
                    <ScrollButton aria-label="Scroll up"><Triangle w={9} h={5} d="M0 5h9L4.500 0z" fill="#3d4e78" /></ScrollButton>
                    <VThumb>
                        <svg width="8" height="8"><path d="M0 0.500h8M0 2.500h8M0 4.500h8M0 6.500h8" stroke="#6f7f96" /></svg>
                    </VThumb>
                    <VRest />
                    <ScrollButton aria-label="Scroll down"><Triangle w={9} h={5} d="M0 0h9L4.500 5z" fill="#3d4e78" /></ScrollButton>
                </VScroll>
            </Workspace>

            <BottomBar>
                <TabsArea>
                    <SheetNav>
                        <IconButton aria-label="First sheet"><Triangle d="M0 0h1.500v7H0zM7 0v7L2.500 3.500z" /></IconButton>
                        <IconButton aria-label="Previous sheet"><Triangle d="M6 0v7L1.500 3.500z" /></IconButton>
                        <IconButton aria-label="Next sheet"><Triangle d="M2 0v7l4.500-3.500z" /></IconButton>
                        <IconButton aria-label="Last sheet"><Triangle d="M6 0h1.500v7H6zM0.500 0v7L5 3.500z" /></IconButton>
                    </SheetNav>
                    <SheetTabs>
                        <SheetTab $active $width={64}>Sheet1</SheetTab>
                        <SheetTab>Sheet2</SheetTab>
                        <SheetTab>Sheet3</SheetTab>
                        <SheetTab $width={34} aria-label="New sheet"><NewSheetIcon /></SheetTab>
                    </SheetTabs>
                </TabsArea>
                <HScroll>
                    <HSplit />
                    <ScrollButton $wide aria-label="Scroll left"><Triangle w={5} h={9} d="M5 0v9L0 4.500z" fill="#3d4e78" /></ScrollButton>
                    <HThumb>
                        <svg width="8" height="7"><path d="M0.500 0v7M2.500 0v7M4.500 0v7M6.500 0v7" stroke="#6f7f96" /></svg>
                    </HThumb>
                    <HRest />
                    <ScrollButton $wide aria-label="Scroll right"><Triangle w={5} h={9} d="M0 0v9l5-4.500z" fill="#3d4e78" /></ScrollButton>
                    <HSplit />
                </HScroll>
            </BottomBar>

            <StatusBar>
                <StatusText>Ready</StatusText>
                <ZoomArea>
                    <Views>
                        <ViewButton $on aria-label="Normal view">
                            <svg width="13" height="11" fill="#fff" stroke="#6f6a5c"><path d="M0.500 0.500h12v10h-12zM4.500 0v11M8.500 0v11M0 3.500h13M0 7.500h13" /></svg>
                        </ViewButton>
                        <ViewButton aria-label="Page layout view">
                            <svg width="12" height="12" stroke="#666"><path d="M1 1h10v10H1z" fill="#aaa" strokeWidth="1.500" /><path d="M3.500 2.500h5v7h-5z" fill="#fff" /></svg>
                        </ViewButton>
                        <ViewButton aria-label="Page break view">
                            <svg width="12" height="12" stroke="#666"><path d="M1 1h10v10H1z" fill="#aaa" strokeWidth="1.500" /><path d="M1.500 0.500h3.500v7H1.500zM6.500 0.500h4v6h-4z" fill="#fff" /></svg>
                        </ViewButton>
                    </Views>
                    <span>100%</span>
                    <ZoomControl>
                        <IconButton aria-label="Zoom out"><ZoomRound /></IconButton>
                        <ZoomSlider type="range" aria-label="Zoom" min="0" max="100" defaultValue="50" />
                        <IconButton aria-label="Zoom in"><ZoomRound plus /></IconButton>
                    </ZoomControl>
                </ZoomArea>
            </StatusBar>
            <DesktopEdge />
        </Shell>
    )
}
